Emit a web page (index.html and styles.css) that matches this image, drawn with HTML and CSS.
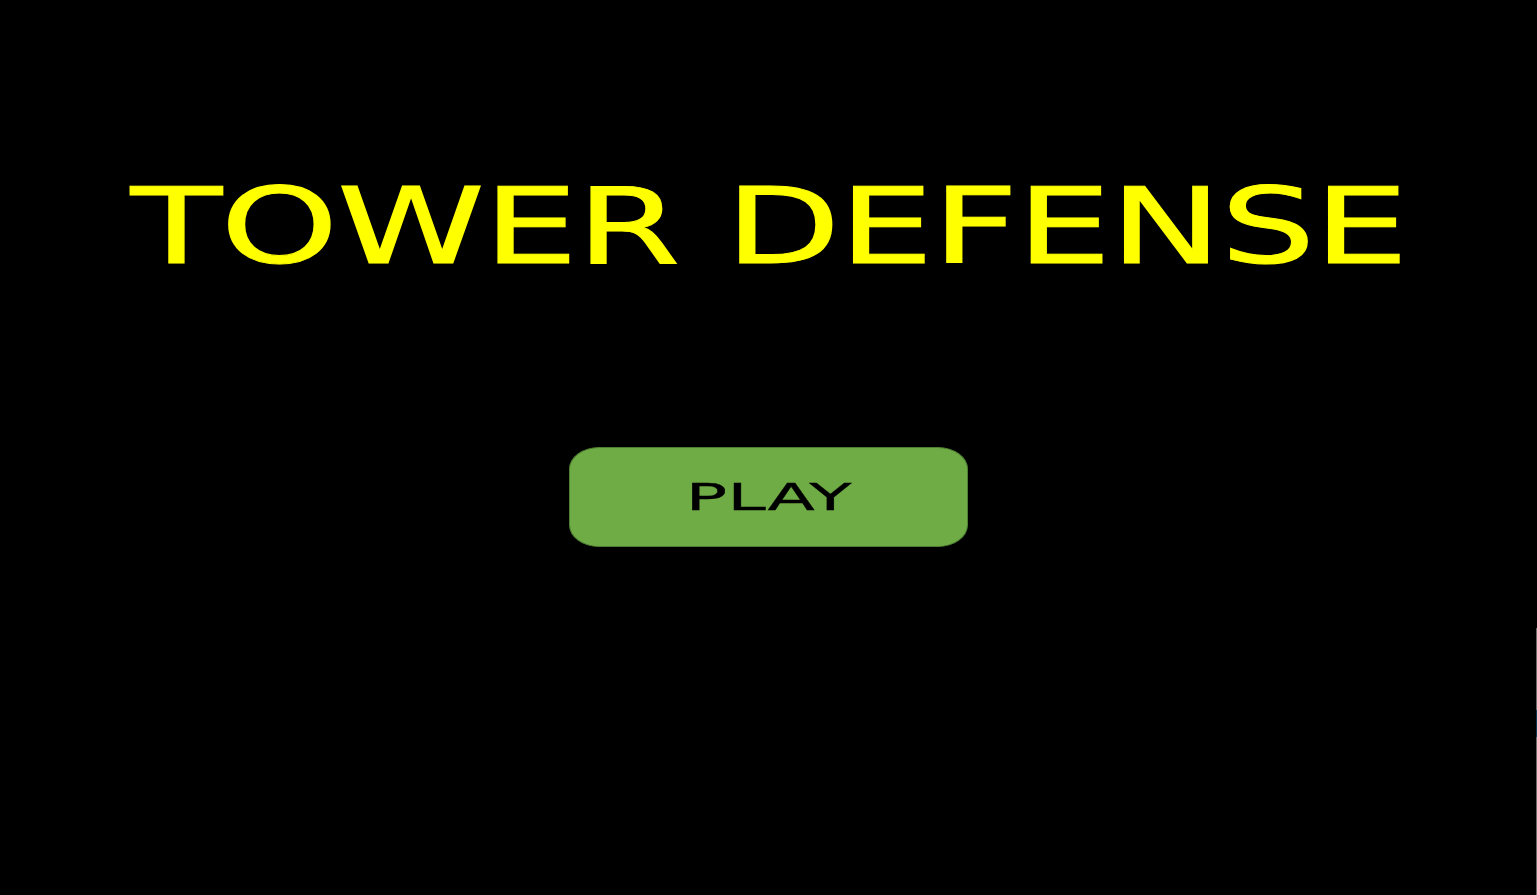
FILE: index.html
```html
<!DOCTYPE html>
<html lang="en">
<head>
  <meta charset="UTF-8">
  <title>Tower Defense</title>
  <meta name="viewport" content="width=device-width, initial-scale=1.0">
  <link rel="stylesheet" href="styles.css">
</head>
<body>

  <div class="menu">
    <h1 class="title"><span>TOWER DEFENSE</span></h1>
    <button class="play-btn" type="button"><span>PLAY</span></button>
  </div>

  <div class="edge"></div>

</body>
</html>
```

FILE: styles.css
```css
html, body {
  height: 100%;
}

body {
  margin: 0;
  background-color: #000;
  font-family: "DejaVu Sans", sans-serif;
  overflow: hidden;
  position: relative;
}

.menu {
  display: flex;
  flex-direction: column;
  align-items: center;
  padding-top: 167px;
}

.title {
  margin: 0;
  width: 1276px;
  height: 110px;
  font-size: 105px;
  font-weight: normal;
  line-height: 120px;
  color: #ffff00;
  text-align: center;
  white-space: nowrap;
}

.title span {
  display: inline-block;
  letter-spacing: -1px;
  -webkit-text-stroke: 1px #ffff00;
  transform: scaleX(1.425);
  transform-origin: center center;
}

.play-btn {
  margin-top: 170px;
  margin-left: -1px;
  width: 399px;
  height: 100px;
  background-color: #6fac46;
  border: 1px solid #4e7f32;
  border-radius: 30px / 22px;
  color: #000;
  font-family: "DejaVu Sans", sans-serif;
  font-size: 38px;
  padding: 0 0 0 1px;
  cursor: pointer;
}

.play-btn span {
  display: inline-block;
  -webkit-text-stroke: 0.3px #000;
  transform: scaleX(1.82);
  letter-spacing: 0;
}

/* thin window edge on the right */
.edge {
  position: absolute;
  right: 0;
  top: 628px;
  bottom: 0;
  width: 1px;
  background: linear-gradient(#6a6a6a 0, #6a6a6a 82px, #0b3a52 82px, #0b3a52 109px, #6a6a6a 109px);
}
```
